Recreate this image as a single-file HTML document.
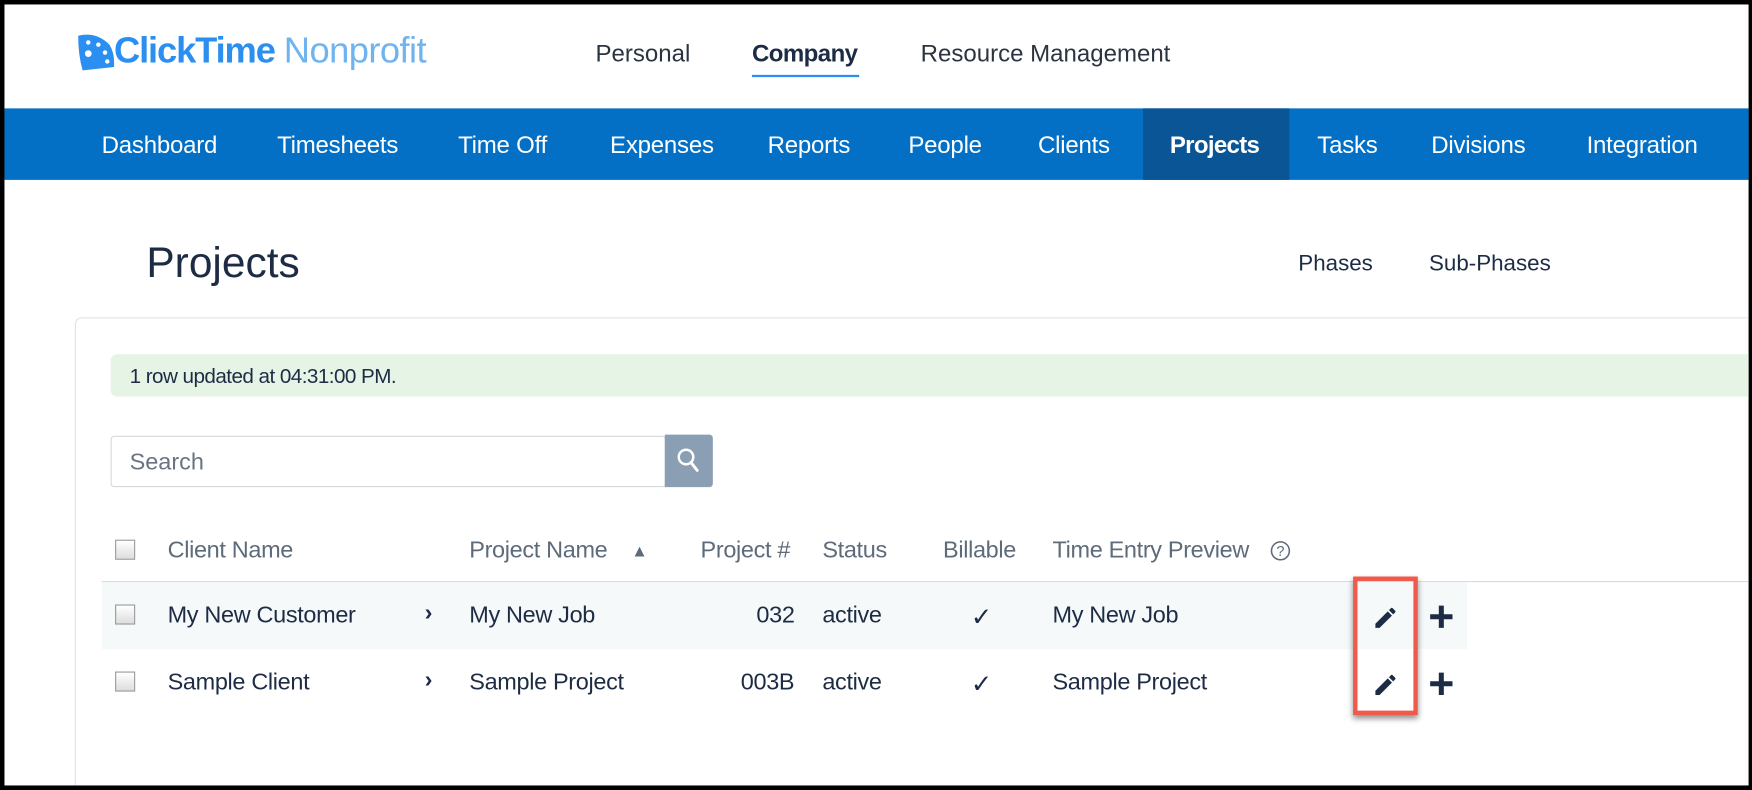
<!DOCTYPE html>
<html><head><meta charset="utf-8"><style>
*{margin:0;padding:0;box-sizing:border-box}
html,body{width:1752px;height:790px;overflow:hidden;background:#000}
#s{position:absolute;left:0;top:0;width:1568px;height:707px;transform:scale(1.1173);transform-origin:0 0;background:#000;font-family:"Liberation Sans",sans-serif;overflow:hidden}
#p{position:absolute;left:4px;top:4px;width:1561px;height:699px;background:#fff;overflow:hidden}
.a{position:absolute;white-space:nowrap}
.nav{position:absolute;left:0;top:93px;width:100%;height:64px;background:#0370c6}
.nav span{position:absolute;top:21px;color:#fff;font-size:21.5px;letter-spacing:-0.2px}
.hd{color:#5d6b7a;font-size:21px;top:477px;letter-spacing:-0.3px}
.r{color:#1d2c44;font-size:21px;letter-spacing:-0.3px}
.cb{position:absolute;width:18px;height:18px;border:1px solid #999;background:linear-gradient(#fff,#ddd);left:99px}
</style></head><body><div id="s"><div id="p">
<svg class="a" style="left:64px;top:26px" width="36" height="34" viewBox="0 0 36 34"><path d="M2 2 Q18 -2 30 10 Q35 18 34 30 L6 33 Q2 20 2 2Z" fill="#2a8ff0"/><circle cx="11" cy="8" r="2" fill="#fff"/><circle cx="20" cy="10" r="2" fill="#fff"/><circle cx="26" cy="17" r="2" fill="#fff"/><circle cx="28" cy="25" r="2" fill="#fff"/><circle cx="11" cy="18" r="3" fill="#fff"/></svg>
<div class="a" style="left:98px;top:23px;font-size:32.5px;color:#2a8ff0;font-weight:bold;letter-spacing:-1px">ClickTime <span style="font-weight:normal;color:#6fb4f0;letter-spacing:-0.5px">Nonprofit</span></div>
<div class="a" style="left:529px;top:32px;font-size:21.5px;color:#2b3440">Personal</div>
<div class="a" style="left:669px;top:32px;font-size:21.5px;color:#1d2c44;font-weight:bold;letter-spacing:-0.5px">Company</div>
<div class="a" style="left:669px;top:63px;width:96px;height:2px;background:#2a8ff0"></div>
<div class="a" style="left:820px;top:32px;font-size:21.5px;color:#2b3440">Resource Management</div>
<div class="nav">
<div class="a" style="left:1019px;top:0;width:131px;height:64px;background:#0a5596"></div>
<span style="left:87px">Dashboard</span><span style="left:244px">Timesheets</span><span style="left:406px">Time Off</span><span style="left:542px">Expenses</span><span style="left:683px">Reports</span><span style="left:809px">People</span><span style="left:925px">Clients</span><span style="left:1043px;font-weight:bold;letter-spacing:-0.6px">Projects</span><span style="left:1175px">Tasks</span><span style="left:1277px">Divisions</span><span style="left:1416px">Integration</span>
</div>
<div class="a" style="left:127px;top:211px;font-size:38px;color:#1d2c44">Projects</div>
<div class="a" style="left:1158px;top:221px;font-size:20px;color:#1d2c44">Phases</div>
<div class="a" style="left:1275px;top:221px;font-size:20px;color:#1d2c44">Sub-Phases</div>
<div class="a" style="left:63px;top:280px;width:1600px;height:440px;border:1px solid #dfe3e6;border-radius:6px"></div>
<div class="a" style="left:95px;top:313px;width:1500px;height:38px;background:#e6f4e6;border-radius:6px"></div>
<div class="a" style="left:112px;top:322px;font-size:18.5px;color:#1d2c44;letter-spacing:-0.5px">1 row updated at 04:31:00 PM.</div>
<div class="a" style="left:95px;top:386px;width:497px;height:46px;border:1px solid #d5d9dc;border-radius:3px"></div>
<div class="a" style="left:112px;top:398px;font-size:21px;color:#6a7480">Search</div>
<div class="a" style="left:591px;top:385px;width:43px;height:47px;background:#8a9fb3;border-radius:0 3px 3px 0"></div>
<svg class="a" style="left:601px;top:396px" width="22" height="24" viewBox="0 0 22 24"><circle cx="9" cy="9" r="6.5" fill="none" stroke="#fff" stroke-width="2.2"/><path d="M13.5 14 L19 21" stroke="#fff" stroke-width="2.6" stroke-linecap="round"/></svg>
<div class="cb" style="top:479px"></div>
<div class="a hd" style="left:146px">Client Name</div>
<div class="a hd" style="left:416px">Project Name</div>
<div class="a" style="left:561px;top:481px;font-size:15px;color:#5d6b7a">▲</div>
<div class="a hd" style="left:623px">Project #</div>
<div class="a hd" style="left:732px">Status</div>
<div class="a hd" style="left:840px">Billable</div>
<div class="a hd" style="left:938px">Time Entry Preview</div>
<svg class="a" style="left:1132px;top:479px" width="20" height="20"><circle cx="10" cy="10" r="8" fill="none" stroke="#5d6b7a" stroke-width="1.4"/><text x="10" y="14.5" font-size="13" text-anchor="middle" fill="#5d6b7a" font-family="Liberation Sans">?</text></svg>
<div class="a" style="left:87px;top:516px;width:1500px;height:1px;background:#d5dde2"></div>
<div class="a" style="left:87px;top:517px;width:1222px;height:60px;background:#f5f9fa"></div>
<div class="cb" style="top:537px"></div><div class="cb" style="top:597px"></div>
<div class="a r" style="left:146px;top:535px">My New Customer</div>
<div class="a r" style="left:146px;top:595px">Sample Client</div>
<div class="a r" style="left:376px;top:533px;font-weight:bold">›</div><div class="a r" style="left:376px;top:593px;font-weight:bold">›</div>
<div class="a r" style="left:673px;top:535px">032</div>
<div class="a r" style="left:416px;top:535px">My New Job</div>
<div class="a r" style="left:416px;top:595px">Sample Project</div>
<div class="a r" style="left:659px;top:595px">003B</div>
<div class="a r" style="left:732px;top:535px">active</div>
<div class="a r" style="left:732px;top:595px">active</div>
<div class="a r" style="left:865px;top:535px;font-size:23px">✓</div>
<div class="a r" style="left:865px;top:595px;font-size:23px">✓</div>
<div class="a r" style="left:938px;top:535px">My New Job</div>
<div class="a r" style="left:938px;top:595px">Sample Project</div>
<svg class="a" style="left:1224px;top:537px" width="24" height="24" viewBox="0 0 24 24"><path d="M3 17.25V21h3.750L17.81 9.94l-3.75-3.75L3 17.25zM20.71 7.04a1 1 0 000-1.41l-2.34-2.34a1 1 0 00-1.41 0l-1.83 1.83 3.75 3.75 1.83-1.83z" fill="#1d2c44"/></svg>
<svg class="a" style="left:1224px;top:597px" width="24" height="24" viewBox="0 0 24 24"><path d="M3 17.25V21h3.75L17.81 9.94l-3.75-3.75L3 17.25zM20.71 7.04a1 1 0 000-1.41l-2.34-2.34a1 1 0 00-1.41 0l-1.83 1.83 3.75 3.75 1.83-1.83z" fill="#1d2c44"/></svg>
<svg class="a" style="left:1274px;top:536px" width="24" height="24"><path d="M12 2v20M2 12h20" stroke="#1d2c44" stroke-width="4.5"/></svg>
<svg class="a" style="left:1274px;top:596px" width="24" height="24"><path d="M12 2v20M2 12h20" stroke="#1d2c44" stroke-width="4.5"/></svg>
<div class="a" style="left:1207px;top:512px;width:58px;height:124px;border:4px solid #f05a4b;box-shadow:0 3px 5px rgba(0,0,0,.45)"></div>
</div></div></body></html>
